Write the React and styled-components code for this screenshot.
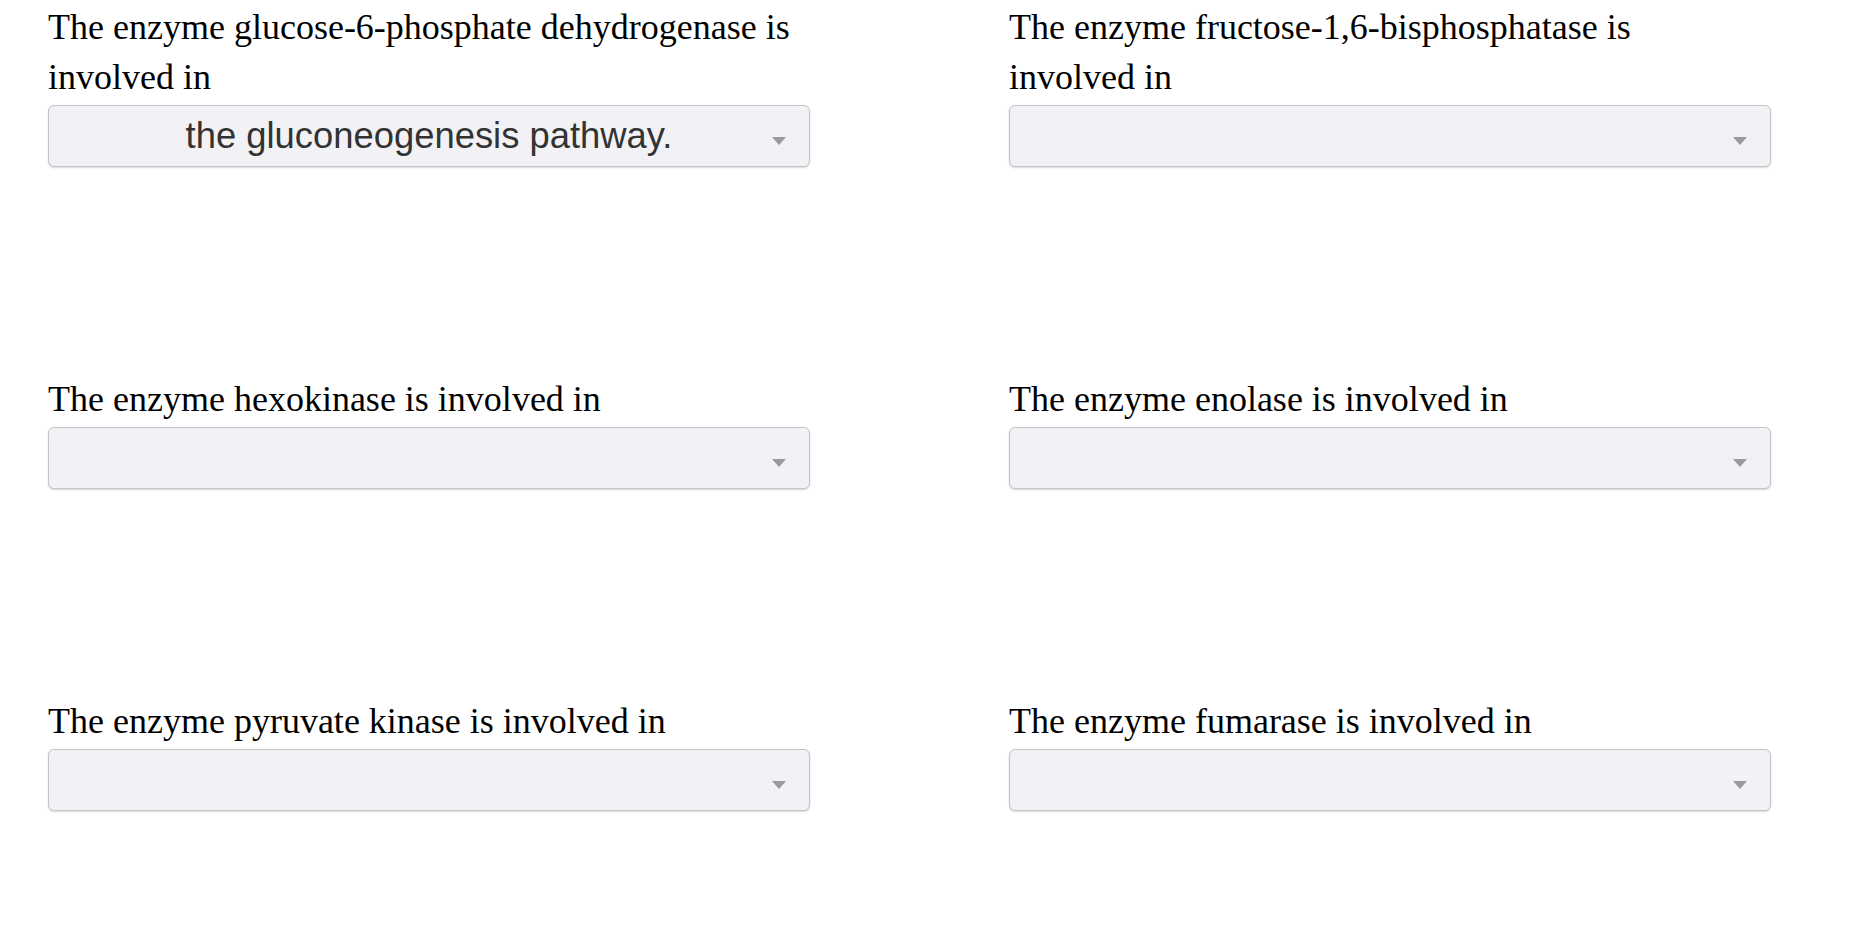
import React from "react";
import styled, { createGlobalStyle } from "styled-components";

const GlobalStyle = createGlobalStyle`
  html, body {
    margin: 0;
    padding: 0;
    background: #ffffff;
  }
  body {
    font-family: "Liberation Serif", "Times New Roman", serif;
    color: #000;
  }
`;

const Page = styled.main`
  padding: 2px 0 0 48px;
`;

const Grid = styled.div`
  display: grid;
  grid-template-columns: 762px 762px;
  grid-auto-rows: 322px;
  column-gap: 199px;
`;

const Question = styled.div`
  display: flex;
  flex-direction: column;
  align-items: flex-start;
`;

const Label = styled.div`
  width: 750px;
  min-height: 100px;
  display: flex;
  align-items: flex-end;
  font-family: "Liberation Serif", "Times New Roman", serif;
  font-size: 36px;
  line-height: 50px;
  color: #000;
  margin-bottom: 3px;
`;

const SelectBox = styled.div`
  position: relative;
  box-sizing: border-box;
  width: 762px;
  height: 62px;
  border: 1.5px solid #c4c4c6;
  border-radius: 6px;
  background: #f2f2f6;
  box-shadow: 0 1px 2px rgba(0, 0, 0, 0.16);
  display: flex;
  align-items: center;
  justify-content: center;
  font-family: "Liberation Sans", Arial, Helvetica, sans-serif;
  font-size: 36.4px;
  color: #333;
  cursor: pointer;
`;

const Value = styled.span`
  white-space: nowrap;
`;

const Caret = styled.span`
  position: absolute;
  right: 23px;
  top: 50%;
  margin-top: 1px;
  width: 0;
  height: 0;
  border-left: 7px solid transparent;
  border-right: 7px solid transparent;
  border-top: 8px solid #9a9a9a;
`;

const questions = [
  { enzyme: "glucose-6-phosphate dehydrogenase", value: "the gluconeogenesis pathway." },
  { enzyme: "fructose-1,6-bisphosphatase", value: "" },
  { enzyme: "hexokinase", value: "" },
  { enzyme: "enolase", value: "" },
  { enzyme: "pyruvate kinase", value: "" },
  { enzyme: "fumarase", value: "" },
];

export default function App() {
  return (
    <>
      <GlobalStyle />
      <Page>
        <Grid>
          {questions.map((q) => (
            <Question key={q.enzyme}>
              <Label>
                <span>The enzyme {q.enzyme} is involved in</span>
              </Label>
              <SelectBox role="combobox" aria-label={`Pathway for ${q.enzyme}`}>
                <Value>{q.value}</Value>
                <Caret />
              </SelectBox>
            </Question>
          ))}
        </Grid>
      </Page>
    </>
  );
}
